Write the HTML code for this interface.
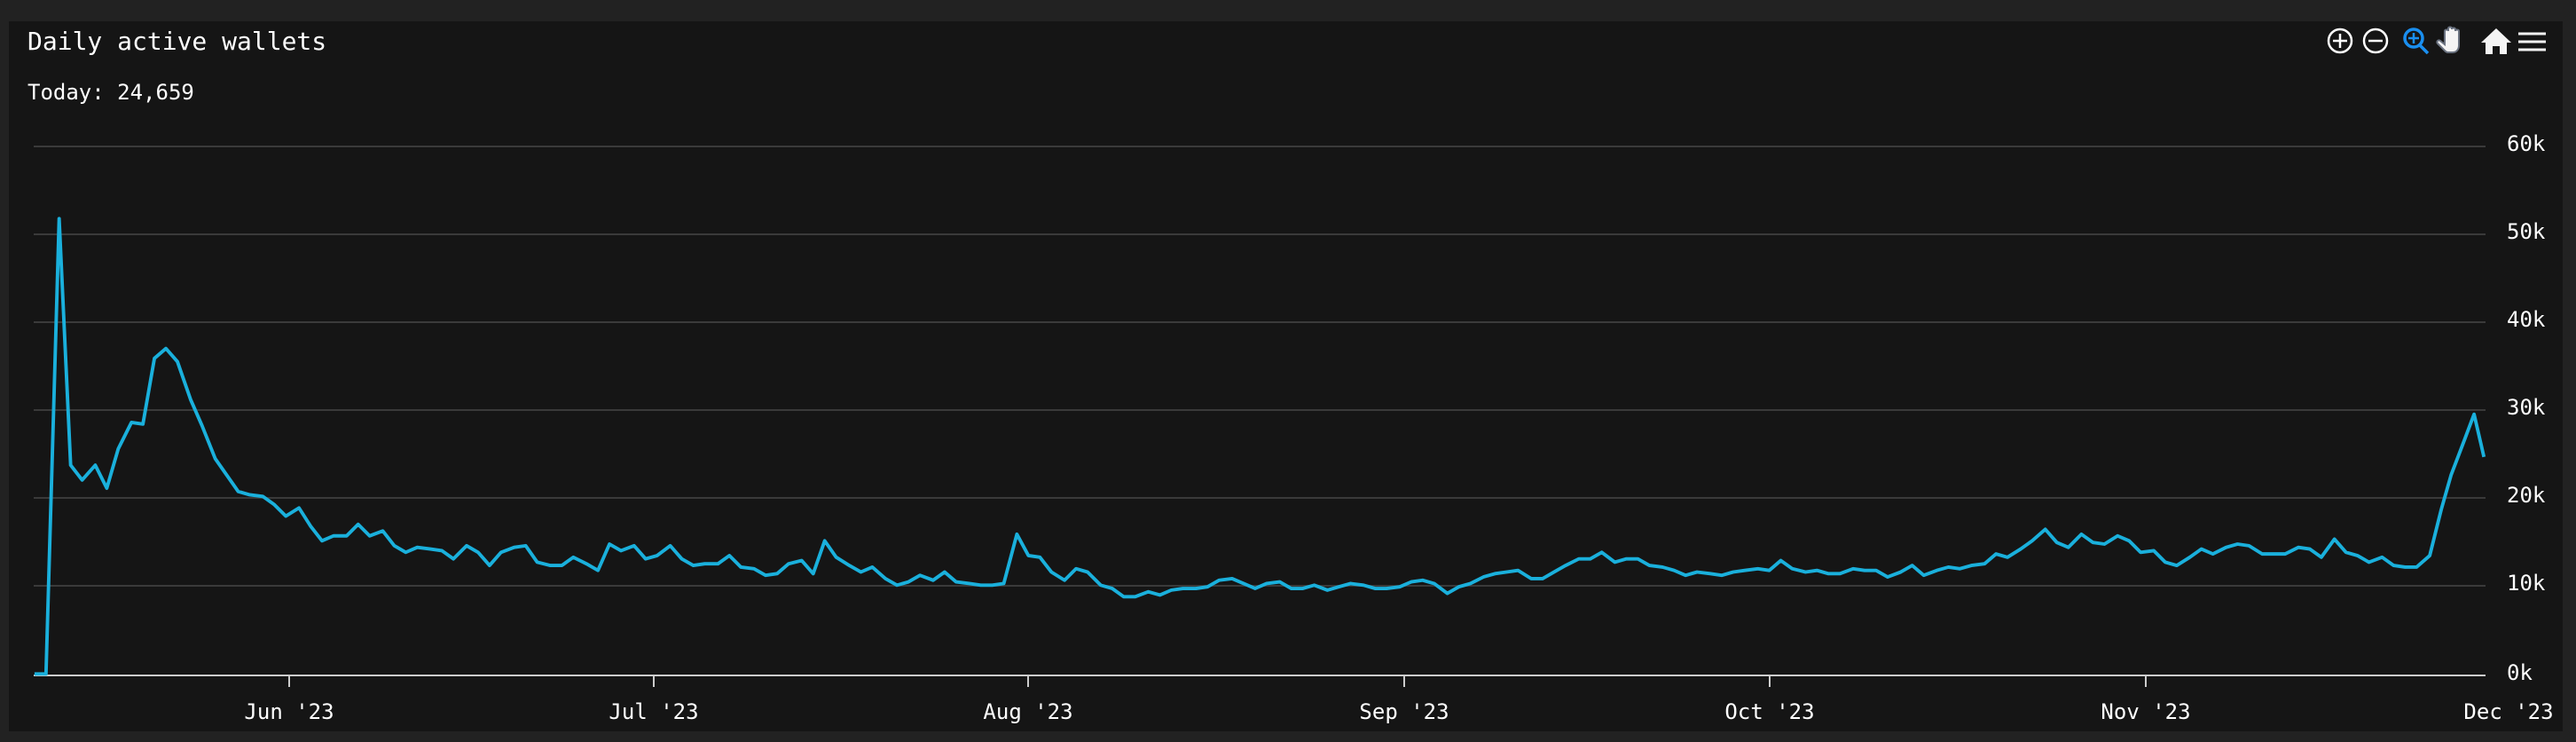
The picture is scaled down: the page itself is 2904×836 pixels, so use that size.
<!DOCTYPE html>
<html><head><meta charset="utf-8"><style>
html,body{margin:0;padding:0;background:#222;width:2904px;height:836px;overflow:hidden}
.p{position:absolute;left:10px;top:24px;width:2879px;height:800px;background:#151515}
.t{position:absolute;font-family:"DejaVu Sans Mono","Liberation Mono",monospace;color:#fff;white-space:nowrap}
</style></head><body>
<div class="p"></div>
<div class="t" style="left:31px;top:30px;font-size:28px">Daily active wallets</div>
<div class="t" style="left:31px;top:90px;font-size:24px">Today: 24,659</div>
<svg style="position:absolute;left:0;top:0" width="2904" height="836">
<g stroke="#3a3a3a" stroke-width="2">
<line x1="38" x2="2802" y1="165" y2="165"/><line x1="38" x2="2802" y1="264" y2="264"/>
<line x1="38" x2="2802" y1="363" y2="363"/><line x1="38" x2="2802" y1="462" y2="462"/>
<line x1="38" x2="2802" y1="561" y2="561"/><line x1="38" x2="2802" y1="660" y2="660"/>
</g>
<line x1="38" x2="2802" y1="761" y2="761" stroke="#ccc" stroke-width="2"/>
<g stroke="#ccc" stroke-width="2">
<line x1="326" x2="326" y1="761" y2="774"/><line x1="737" x2="737" y1="761" y2="774"/>
<line x1="1159" x2="1159" y1="761" y2="774"/><line x1="1583" x2="1583" y1="761" y2="774"/>
<line x1="1995" x2="1995" y1="761" y2="774"/><line x1="2419" x2="2419" y1="761" y2="774"/>
</g>
<g font-family="DejaVu Sans Mono,monospace" font-size="24" fill="#fff">
<text x="2826" y="170">60k</text><text x="2826" y="269">50k</text><text x="2826" y="368">40k</text>
<text x="2826" y="467">30k</text><text x="2826" y="566">20k</text><text x="2826" y="665">10k</text>
<text x="2826" y="766">0k</text>
<g text-anchor="middle">
<text x="326" y="810">Jun '23</text><text x="737" y="810">Jul '23</text><text x="1159" y="810">Aug '23</text>
<text x="1583" y="810">Sep '23</text><text x="1995" y="810">Oct '23</text><text x="2419" y="810">Nov '23</text>
<text x="2828" y="810">Dec '23</text></g></g>
<g transform="scale(1.852)">
<polyline fill="none" stroke="#1ab0dc" stroke-width="2.1" stroke-linejoin="round" points="21,410 28,410 36,133 43,283 50,292 58,283 65,297 72,273 80,257 87,258 94,218 101,212 108,220 116,243 123,259 131,279 138,289 145,299 152,301 160,302 167,307 174,314 182,309 189,320 196,329 203,326 211,326 218,319 225,326 233,323 240,332 247,336 254,333 262,334 269,335 276,340 284,332 291,336 298,344 305,336 313,333 320,332 327,342 335,344 342,344 349,339 357,343 364,347 371,331 378,335 386,332 393,340 400,338 408,332 415,340 422,344 429,343 437,343 444,338 451,345 459,346 466,350 473,349 480,343 488,341 495,349 502,329 509,339 517,344 524,348 531,345 539,352 546,356 553,354 560,350 568,353 575,348 582,354 590,355 597,356 604,356 611,355 619,325 626,338 633,339 640,348 648,353 655,346 662,348 670,356 677,358 684,363 691,363 699,360 706,362 713,359 720,358 728,358 735,357 742,353 750,352 757,355 764,358 771,355 779,354 786,358 793,358 800,356 808,359 815,357 822,355 830,356 837,358 844,358 852,357 859,354 866,353 873,355 881,361 888,357 895,355 903,351 910,349 917,348 924,347 932,352 939,352 946,348 953,344 961,340 968,340 975,336 983,342 990,340 997,340 1004,344 1012,345 1019,347 1026,350 1033,348 1041,349 1048,350 1055,348 1062,347 1070,346 1077,347 1084,341 1091,346 1099,348 1106,347 1113,349 1120,349 1128,346 1135,347 1142,347 1149,351 1157,348 1164,344 1171,350 1179,347 1186,345 1193,346 1200,344 1208,343 1215,337 1222,339 1230,334 1237,329 1245,322 1252,330 1259,333 1267,325 1274,330 1281,331 1289,326 1296,329 1303,336 1311,335 1318,342 1325,344 1333,339 1340,334 1347,337 1355,333 1362,331 1369,332 1377,337 1384,337 1391,337 1399,333 1406,334 1413,339 1421,328 1428,336 1435,338 1442,342 1450,339 1457,344 1464,345 1471,345 1479,338 1486,310 1492,289 1500,268 1506,252 1512,278"/>
</g>
<g fill="none" stroke="#fff" stroke-width="2.5">
<circle cx="2638" cy="46" r="13"/><path d="M2638 38v16M2630 46h16"/>
<circle cx="2678" cy="46" r="13"/><path d="M2670 46h16"/>
</g>
<g fill="none" stroke="#1a8ff0" stroke-width="3.5">
<circle cx="2721" cy="43" r="10"/><path d="M2728 51l9 9"/><path d="M2721 37v12M2715 43h12" stroke-width="2.5"/>
</g>
<path d="M2757 58l-9-9c-2-2 1-5 3-3l5 4v-15c0-2 4-2 4 0v-3c0-2 4-2 4 0v1c0-2 4-2 4 0v2c0-2 4-2 4 0v16c0 5-3 8-7 8h-6z" fill="#f4f4f4" stroke="#6a7280" stroke-width="2"/>
<path d="M2814 32l-17 16h5v13h8v-9h8v9h8v-13h5z" fill="#f4f4f4"/>
<g stroke="#f4f4f4" stroke-width="3"><path d="M2839 38h31M2839 47h31M2839 56h31"/></g>
</svg>
</body></html>
